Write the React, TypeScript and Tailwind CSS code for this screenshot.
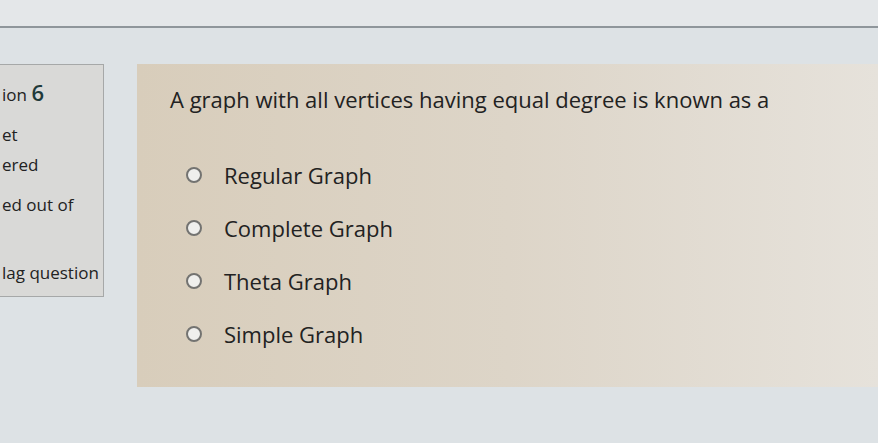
const options = ["Regular Graph", "Complete Graph", "Theta Graph", "Simple Graph"];

function Radio() {
  return (
    <span className="inline-block h-[16px] w-[16px] shrink-0 rounded-full border-2 border-[#737371] bg-[#efefed]" />
  );
}

export default function App() {
  return (
    <div
      className="relative h-[443px] w-[878px] overflow-hidden bg-[#dde2e5] text-[#222222]"
      style={{ fontFamily: '"Open Sans", "Noto Sans", sans-serif' }}
    >
      <div className="h-[28px] border-b-2 border-[#8f969b] bg-[#e4e7e9]" />

      <div className="mt-[36px] flex items-start gap-[33px]">
        {/* question info block, left part runs off the screen */}
        <div className="h-[233px] w-[104px] shrink-0 border border-l-0 border-[#a6a8a8] bg-[#d9d9d7] pl-[2px] pt-[16px] text-[17px] leading-[22px]">
          <p>
            ion <span className="text-[22px] font-semibold text-[#1f3a3a]">6</span>
          </p>
          <p className="mt-[18px]">et</p>
          <p className="mt-[8px]">ered</p>
          <p className="mt-[18px]">ed out of</p>
          <p className="mt-[46px]">lag question</p>
        </div>

        {/* question content */}
        <div className="h-[323px] flex-1 bg-gradient-to-r from-[#d8cdbb] via-[#ddd5c8] to-[#e6e2db] pl-[33px] pt-[20px]">
          <p className="text-[22px] leading-[30px]">
            A graph with all vertices having equal degree is known as a
          </p>
          <div className="mt-[47px] flex flex-col gap-[25px] pl-[16px]">
            {options.map((o) => (
              <label key={o} className="flex h-[28px] items-center gap-[22px] text-[22px]">
                <Radio />
                {o}
              </label>
            ))}
          </div>
        </div>
      </div>
    </div>
  );
}
